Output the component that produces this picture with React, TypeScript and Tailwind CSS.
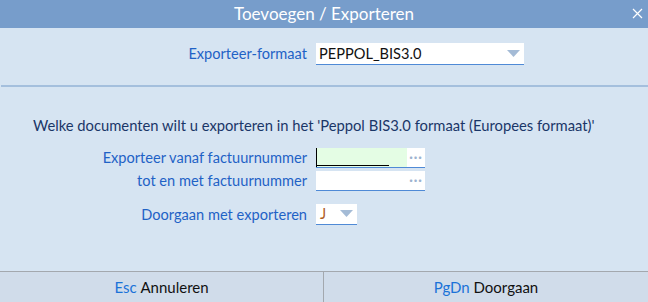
import React from "react";

const font = { fontFamily: "Lato, 'Open Sans', sans-serif" };

function Dots() {
  return <span className="text-[#9db3cf] text-[13px] leading-none tracking-[1px] font-bold">···</span>;
}

function Arrow() {
  return (
    <svg width="13" height="8" viewBox="0 0 13 8">
      <polygon points="0,0 13,0 6.5,7" fill="#a4bbd6" />
    </svg>
  );
}

export default function App() {
  return (
    <div className="w-[648px] h-[302px] bg-[#d6e4f2] flex flex-col overflow-hidden" style={font}>
      <div className="h-[28px] bg-[#779dcb] relative flex items-center justify-center text-white text-[17px]">
        Toevoegen / Exporteren
        <svg className="absolute right-[5px] top-[8px]" width="11" height="11" viewBox="0 0 11 11">
          <path d="M1 1L10 10M10 1L1 10" stroke="white" strokeWidth="1.2" />
        </svg>
      </div>
      <div className="flex-1 flex flex-col">
        <div className="flex items-center mt-[15px] h-[22px]">
          <div className="w-[307px] text-right text-[#1f62c6] text-[14.6px]">Exporteer-formaat</div>
          <div className="ml-[9px] w-[208px] h-[22px] bg-white border-b border-[#4f8ad6] flex items-center justify-between pl-[3px] pr-[4px] text-[14.6px] text-[#111]">
            <span>PEPPOL_BIS3.0</span>
            <Arrow />
          </div>
        </div>
        <div className="mt-[20px] ml-[1px] h-[2px] bg-[#a4bfdd]" />
        <div className="mt-[28px] pl-[33px] text-[14.75px] text-[#1a3668] h-[20px] leading-[20px]">
          Welke documenten wilt u exporteren in het 'Peppol BIS3.0 formaat (Europees formaat)'
        </div>
        <div className="mt-[13px] flex items-center h-[20px]">
          <div className="w-[307px] text-right text-[#1f62c6] text-[14.6px]">Exporteer vanaf factuurnummer</div>
          <div className="ml-[9px] w-[109px] h-[20px] bg-white border-b border-[#4f8ad6] flex items-stretch">
            <div className="w-[91px] bg-[#e4fde4] relative border-l border-black">
              <div className="absolute left-0 bottom-[1px] w-[72px] h-[1px] bg-black" />
            </div>
            <div className="flex-1 flex items-center justify-center"><Dots /></div>
          </div>
        </div>
        <div className="mt-[3px] flex items-center h-[20px]">
          <div className="w-[307px] text-right text-[#1f62c6] text-[14.6px]">tot en met factuurnummer</div>
          <div className="ml-[9px] w-[109px] h-[20px] bg-white border-b border-[#4f8ad6] flex items-stretch">
            <div className="w-[91px]" />
            <div className="flex-1 flex items-center justify-center"><Dots /></div>
          </div>
        </div>
        <div className="mt-[13px] flex items-center h-[21px]">
          <div className="w-[307px] text-right text-[#1f62c6] text-[14.6px]">Doorgaan met exporteren</div>
          <div className="ml-[9px] w-[41px] h-[21px] bg-white border-b border-[#4f8ad6] flex items-center justify-between pl-[4px] pr-[4px] text-[14.6px] text-[#b0601f]">
            <span>J</span>
            <Arrow />
          </div>
        </div>
      </div>
      <div className="h-[31px] bg-[#d0dcea] border-t border-[#a3a8ae] flex text-[15px]">
        <div className="w-[324px] border-r border-[#a3a8ae] flex items-center justify-center">
          <span className="text-[#1a72d8]">Esc</span>&nbsp;<span className="text-[#111]">Annuleren</span>
        </div>
        <div className="flex-1 flex items-center justify-center">
          <span className="text-[#1a72d8]">PgDn</span>&nbsp;<span className="text-[#111]">Doorgaan</span>
        </div>
      </div>
    </div>
  );
}
